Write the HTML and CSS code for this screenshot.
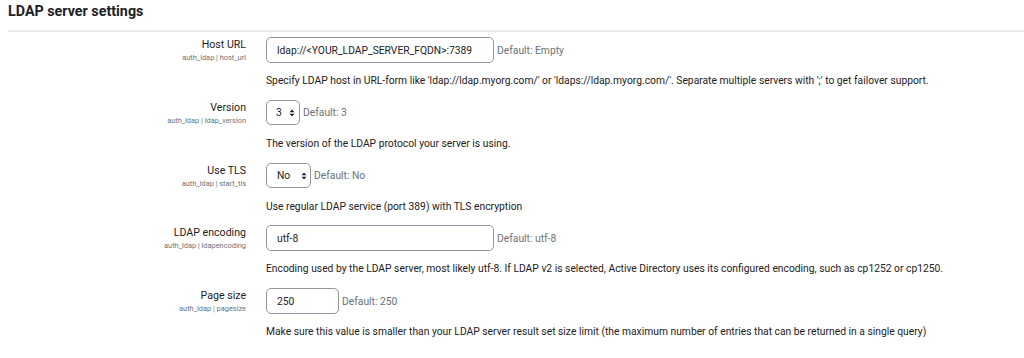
FILE: index.html
```html
<!DOCTYPE html>
<html>
<head>
<meta charset="utf-8">
<link rel="stylesheet" href="styles.css">
</head>
<body>
<h3 class="heading">LDAP server settings</h3>
<div class="divider"></div>
<div class="settings">
  <div class="row">
    <div class="label"><div class="name">Host URL</div><div class="key">auth_ldap | host_url</div></div>
    <div class="content">
      <div class="control"><div class="input w-long">ldap://&lt;YOUR_LDAP_SERVER_FQDN&gt;:7389</div><span class="default">Default: Empty</span></div>
      <div class="desc">Specify LDAP host in URL-form like 'ldap://ldap.myorg.com/' or 'ldaps://ldap.myorg.com/'. Separate multiple servers with ';' to get failover support.</div>
    </div>
  </div>
  <div class="row">
    <div class="label"><div class="name">Version</div><div class="key">auth_ldap | ldap_version</div></div>
    <div class="content">
      <div class="control"><div class="select w-ver">3<svg class="arrow" width="6" height="8" viewBox="0 0 6 8"><path d="M0.5 3.2 L3 0.5 L5.5 3.2 Z M0.5 4.8 L3 7.5 L5.5 4.8 Z" fill="#1d2125"/></svg></div><span class="default">Default: 3</span></div>
      <div class="desc">The version of the LDAP protocol your server is using.</div>
    </div>
  </div>
  <div class="row">
    <div class="label"><div class="name">Use TLS</div><div class="key">auth_ldap | start_tls</div></div>
    <div class="content">
      <div class="control"><div class="select w-tls">No<svg class="arrow" width="6" height="8" viewBox="0 0 6 8"><path d="M0.5 3.2 L3 0.5 L5.5 3.2 Z M0.5 4.8 L3 7.5 L5.5 4.8 Z" fill="#1d2125"/></svg></div><span class="default">Default: No</span></div>
      <div class="desc">Use regular LDAP service (port 389) with TLS encryption</div>
    </div>
  </div>
  <div class="row">
    <div class="label"><div class="name">LDAP encoding</div><div class="key">auth_ldap | ldapencoding</div></div>
    <div class="content">
      <div class="control"><div class="input w-long">utf-8</div><span class="default">Default: utf-8</span></div>
      <div class="desc">Encoding used by the LDAP server, most likely utf-8. If LDAP v2 is selected, Active Directory uses its configured encoding, such as cp1252 or cp1250.</div>
    </div>
  </div>
  <div class="row">
    <div class="label"><div class="name">Page size</div><div class="key">auth_ldap | pagesize</div></div>
    <div class="content">
      <div class="control"><div class="input w-page">250</div><span class="default">Default: 250</span></div>
      <div class="desc">Make sure this value is smaller than your LDAP server result set size limit (the maximum number of entries that can be returned in a single query)</div>
    </div>
  </div>
</div>
</body>
</html>
```
FILE: styles.css
```css
html, body {
  margin: 0;
  padding: 0;
  background: #ffffff;
}
body {
  font-family: Roboto, "Liberation Sans", sans-serif;
  color: #1d2125;
  font-size: 10.3px;
  width: 1024px;
  height: 358px;
  overflow: hidden;
}
.heading {
  margin: 0;
  padding: 2px 0 0 8px;
  font-size: 14.3px;
  font-weight: 700;
  line-height: 18px;
  box-sizing: border-box;
  height: 30px;
}
.divider {
  margin-left: 8px;
  height: 2px;
  background: #ececec;
  margin-bottom: 5px;
}
.settings {
  display: flex;
  flex-direction: column;
}
.row {
  display: grid;
  grid-template-columns: 246px 1fr;
  column-gap: 20px;
  height: 62.75px;
}
.label {
  text-align: right;
  padding-top: 1px;
}
.name {
  font-size: 10.6px;
  line-height: 14px;
}
.key {
  font-size: 7.4px;
  line-height: 11px;
  color: #6a737b;
}
.content {
  display: flex;
  flex-direction: column;
}
.control {
  display: flex;
  align-items: center;
  height: 26px;
}
.input, .select {
  box-sizing: border-box;
  height: 26px;
  border: 1px solid #8f959e;
  border-radius: 5px;
  display: flex;
  align-items: center;
  padding-left: 10px;
  font-size: 10.3px;
  background: #fff;
}
.select {
  height: 25px;
  justify-content: flex-start;
  gap: 7px;
  padding-left: 9px;
}
.w-long { width: 228px; }
.w-page { width: 73px; }
.w-ver { width: 34px; }
.w-tls { width: 45px; padding-left: 10px; gap: 11px; }
.arrow { flex: none; }
.default {
  margin-left: 3px;
  color: #6a737b;
  font-size: 10.3px;
}
.desc {
  margin-top: 11px;
  line-height: 14px;
  font-size: 10.3px;
}
```
